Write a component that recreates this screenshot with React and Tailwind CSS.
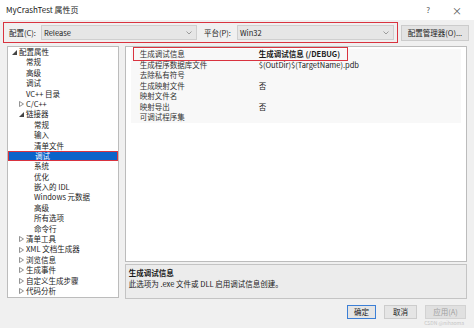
import React from 'react';

const FONT = { fontFamily: '"Noto Sans CJK SC", "Noto Sans", sans-serif' };

const tree = [
  { t: '配置属性', lvl: 0, arrow: 'open' },
  { t: '常规', lvl: 1 },
  { t: '高级', lvl: 1 },
  { t: '调试', lvl: 1 },
  { t: 'VC++ 目录', lvl: 1 },
  { t: 'C/C++', lvl: 1, arrow: 'closed' },
  { t: '链接器', lvl: 1, arrow: 'open' },
  { t: '常规', lvl: 2 },
  { t: '输入', lvl: 2 },
  { t: '清单文件', lvl: 2 },
  { t: '调试', lvl: 2, selected: true },
  { t: '系统', lvl: 2 },
  { t: '优化', lvl: 2 },
  { t: '嵌入的 IDL', lvl: 2 },
  { t: 'Windows 元数据', lvl: 2 },
  { t: '高级', lvl: 2 },
  { t: '所有选项', lvl: 2 },
  { t: '命令行', lvl: 2 },
  { t: '清单工具', lvl: 1, arrow: 'closed' },
  { t: 'XML 文档生成器', lvl: 1, arrow: 'closed' },
  { t: '浏览信息', lvl: 1, arrow: 'closed' },
  { t: '生成事件', lvl: 1, arrow: 'closed' },
  { t: '自定义生成步骤', lvl: 1, arrow: 'closed' },
  { t: '代码分析', lvl: 1, arrow: 'closed' },
];

const props = [
  ['生成调试信息', '生成调试信息 (/DEBUG)', true],
  ['生成程序数据库文件', '$(OutDir)$(TargetName).pdb'],
  ['去除私有符号', ''],
  ['生成映射文件', '否'],
  ['映射文件名', ''],
  ['映射导出', '否'],
  ['可调试程序集', ''],
];

const pad = ['pl-[5px]', 'pl-[18px]', 'pl-[26px]'];

function Arrow({ kind }) {
  if (kind === 'open')
    return (
      <svg width="5" height="5" viewBox="0 0 5 5" className="mr-[2px] shrink-0">
        <path d="M5 0 L5 5 L0 5 Z" fill="#444" />
      </svg>
    );
  return (
    <svg width="5" height="6" viewBox="0 0 5 6" className="mr-[2px] shrink-0">
      <path d="M0.5 0.5 L4.5 3 L0.5 5.5 Z" fill="none" stroke="#777" strokeWidth="0.8" />
    </svg>
  );
}

function Combo({ value, width }) {
  return (
    <div className={`flex h-[15px] items-center justify-between border border-[#cfcfcf] bg-[#e6e6e6] pl-[2px] pr-[4px] ${width}`}>
      <span>{value}</span>
      <svg width="6" height="4" viewBox="0 0 6 4">
        <path d="M0.5 0.5 L3 3 L5.5 0.5" fill="none" stroke="#888" strokeWidth="0.8" />
      </svg>
    </div>
  );
}

export default function App() {
  return (
    <div style={FONT} className="flex h-[328px] w-[474px] flex-col bg-[#f0f0f0] text-[7.5px] text-[#1b1b1b]">
      <div className="flex h-[20px] items-center justify-between bg-white pl-[6px] pr-[12px] text-[8px]">
        <span>MyCrashTest 属性页</span>
        <div className="flex items-center gap-[22px] text-[8px] text-[#555]">
          <span>?</span>
          <span className="text-[10px]">×</span>
        </div>
      </div>

      <div className="mt-[2px] flex items-center px-[3px]">
        <div className="flex h-[21px] w-[395px] items-center border border-[#d9333f] pl-[5px] pr-[3px]">
          <span className="w-[32px]">配置(C):</span>
          <Combo value="Release" width="w-[156px]" />
          <span className="ml-[7px] w-[33px]">平台(P):</span>
          <Combo value="Win32" width="w-[157px]" />
        </div>
        <div className="ml-[3px] flex h-[16px] w-[68px] items-center justify-center border border-[#cccccc] bg-[#e3e3e3]">
          配置管理器(O)...
        </div>
      </div>

      <div className="mt-[3px] flex gap-[6px] px-[7px]">
        <div className="flex h-[252px] w-[112px] flex-col overflow-hidden border border-[#bcbcbc] bg-white">
          {tree.map((it, i) => (
            <div
              key={i}
              className={`flex h-[10.4px] shrink-0 items-center leading-[10.4px] ${
                it.selected ? 'border border-[#d9333f] bg-[#0b63c9] text-white' : ''
              } ${it.arrow ? (it.lvl === 0 ? 'pl-[4px]' : 'pl-[11px]') : pad[it.lvl]}`}
            >
              {it.arrow && <Arrow kind={it.arrow} />}
              <span>{it.t}</span>
            </div>
          ))}
        </div>

        <div className="flex w-[343px] flex-col">
          <div className="h-[216px] border border-[#bcbcbc] bg-white px-[5px] pt-[2px]">
            <div className="bg-[#f8f8f8]">
              {props.map(([k, v, first], i) => (
                <div key={i} className="relative flex h-[10.5px] items-center leading-[10.5px]">
                  <span className="w-[128px] pl-[9px] text-[#333]">{k}</span>
                  <span className={first ? 'font-bold' : ''}>{v}</span>
                  {first && (
                    <div className="absolute left-[2px] top-[-2px] h-[14px] w-[215px] border border-[#d9333f]" />
                  )}
                </div>
              ))}
            </div>
          </div>
          <div className="mt-[2px] h-[35px] border border-[#c4c4c4] bg-[#ececec] px-[3px] pt-[2px]">
            <div className="font-bold leading-[11px]">生成调试信息</div>
            <div className="leading-[11px]">此选项为 .exe 文件或 DLL 启用调试信息创建。</div>
          </div>
        </div>
      </div>

      <div className="mt-[6px] flex justify-end gap-[8px] pr-[8px]">
        <div className="flex h-[14px] w-[29px] items-center justify-center border border-[#3c7fd6] bg-[#e5e5e5]">确定</div>
        <div className="flex h-[14px] w-[33px] items-center justify-center border border-[#cccccc] bg-[#e5e5e5]">取消</div>
        <div className="flex h-[14px] w-[41px] items-center justify-center border border-[#d2d2d2] bg-[#e0e0e0] text-[#a0a0a0]">应用(A)</div>
      </div>
      <div className="mt-[1px] pr-[10px] text-right text-[5px] leading-[5px] text-[#c4c4c4]">CSDN @nihaoma</div>
    </div>
  );
}
